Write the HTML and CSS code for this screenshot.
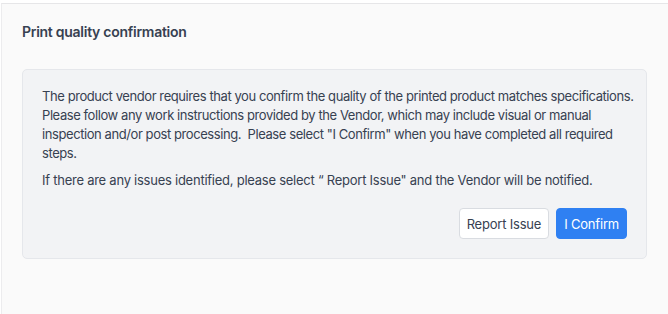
FILE: index.html
```html
<!DOCTYPE html>
<html lang="en">
<head>
  <meta charset="UTF-8">
  <meta name="viewport" content="width=device-width, initial-scale=1.0">
  <title>Print quality confirmation</title>
  <link rel="stylesheet" href="styles.css">
</head>
<body>
  <div class="panel">
    <h2 class="panel-title">Print quality confirmation</h2>

    <div class="notice">
      <p class="notice-main">
        The product vendor requires that you confirm the quality of the printed product matches specifications.<br>
        Please follow any work instructions provided by the Vendor, which may include visual or manual<br>
        inspection and/or post processing.&nbsp; Please select "I Confirm" when you have completed all required<br>
        steps.
      </p>
      <p>If there are any issues identified, please select “ Report Issue" and the Vendor will be notified.</p>

      <div class="actions">
        <button class="btn btn-light">Report Issue</button>
        <button class="btn btn-primary">I Confirm</button>
      </div>
    </div>
  </div>
</body>
</html>
```

FILE: styles.css
```css
body {
  margin: 0;
  padding: 0;
  background-color: #ffffff;
  font-family: Inter, "Noto Sans", sans-serif;
  color: #374151;
}
.panel {
  margin: 3px 0 0 1px;
  min-height: 311px;
  box-sizing: border-box;
  background-color: #fafafa;
  border-top: 1px solid #e6e6e8;
  border-left: 1px solid #ececee;
  padding: 18px 20px 20px 20px;
}
.panel-title {
  font-size: 14px;
  font-weight: 600;
  line-height: 20px;
  letter-spacing: -0.27px;
  margin: 0 0 27px 0;
  color: #374151;
}
.notice {
  width: 625px;
  box-sizing: border-box;
  background-color: #f2f3f5;
  border: 1px solid #e5e7eb;
  border-radius: 5px;
  padding: 17px 19px 19px 19px;
}
.notice p {
  font-size: 13px;
  line-height: 19px;
  letter-spacing: -0.25px;
  white-space: nowrap;
  margin: 0 0 8px 0;
}
.notice .notice-main {
  letter-spacing: -0.42px;
}
.actions {
  display: flex;
  justify-content: flex-end;
  gap: 7px;
  margin-top: 18px;
}
.btn {
  font-family: Inter, "Noto Sans", sans-serif;
  font-size: 13px;
  letter-spacing: -0.2px;
  height: 31px;
  padding: 0 7px;
  border-radius: 4px;
  cursor: pointer;
}
.btn-light {
  background-color: #ffffff;
  color: #374151;
  border: 1px solid #d9dce1;
}
.btn-primary {
  background-color: #2f80f2;
  color: #ffffff;
  border: 1px solid #2f80f2;
}
```
